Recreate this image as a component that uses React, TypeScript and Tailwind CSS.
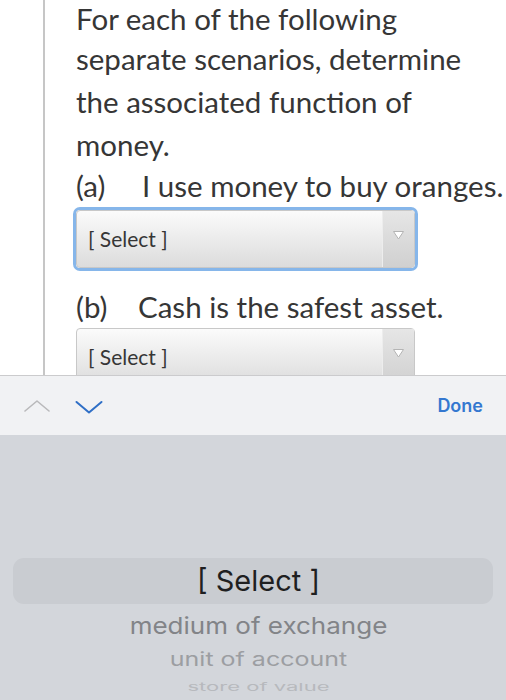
import React from 'react'

function SelectBox({ focused }: { focused?: boolean }) {
  return (
    <div
      className={`relative flex h-[58px] w-[339px] items-center rounded-[4px] border border-[#c8c8c8] bg-gradient-to-b from-[#fbfbfb] to-[#dcdcdc] ${
        focused ? 'ring-[3px] ring-[#86b6ea]' : ''
      }`}
    >
      <span className="pl-[11px] text-[21px] text-[#363636]">[ Select ]</span>
      {/* arrow column */}
      <div className="absolute right-0 top-0 flex h-full w-[32px] items-center justify-center border-l border-[#ededed] bg-gradient-to-b from-[#e6e6e6] to-[#d0d0d0]">
        <svg width="13" height="11" viewBox="0 0 13 11" className="-mt-[7px]">
          <polygon points="1.5,1.5 11.5,1.5 6.5,9" fill="#ffffff" stroke="#b4b4b4" strokeWidth="1" strokeLinejoin="round" />
        </svg>
      </div>
    </div>
  )
}

export default function App() {
  return (
    <div className="relative flex h-[700px] w-[506px] flex-col overflow-hidden bg-white">
      {/* question content */}
      <div className="h-[375px] shrink-0 overflow-hidden pl-[43px]" style={{ fontFamily: 'Lato, "Open Sans", sans-serif' }}>
        <div className="h-full border-l-2 border-[#c6c6c6] pl-[31px] text-[#363636]">
          <p className="pt-[3px] text-[29.5px] leading-[31px]">For each of the following</p>
          <p className="mt-[3px] text-[29.5px] leading-[43px]">
            separate scenarios, determine
            <br />
            the associated function of
            <br />
            money.
          </p>
          <div className="-mt-[2px] flex whitespace-nowrap text-[29.5px] leading-[43px]">
            <span className="w-[66px] shrink-0">(a)</span>
            <span>I use money to buy oranges.</span>
          </div>
          <div className="mt-[3px]">
            <SelectBox focused />
          </div>
          <div className="mt-[17px] flex whitespace-nowrap text-[29.5px] leading-[43px]">
            <span className="w-[62px] shrink-0">(b)</span>
            <span>Cash is the safest asset.</span>
          </div>
          <SelectBox />
        </div>
      </div>

      {/* keyboard accessory bar */}
      <div className="flex h-[60px] shrink-0 items-center border-t border-[#cbcbcd] bg-[#f1f2f4] pl-[24px] pr-[23px]" style={{ fontFamily: 'Inter, "Liberation Sans", sans-serif' }}>
        <svg width="26" height="14" viewBox="0 0 26 14" className="mt-[1px]">
          <polyline points="1,12 13,2 25,12" fill="none" stroke="#b9b9bb" strokeWidth="1.6" strokeLinecap="round" strokeLinejoin="round" />
        </svg>
        <svg width="28" height="15" viewBox="0 0 28 15" className="ml-[25px] mt-[3px]">
          <polyline points="1.5,2 14,12.5 26.5,2" fill="none" stroke="#2f6fc6" strokeWidth="2" strokeLinecap="round" strokeLinejoin="round" />
        </svg>
        <span className="ml-auto text-[18px] font-semibold text-[#3478d0]">Done</span>
      </div>

      {/* picker wheel */}
      <div className="flex flex-1 flex-col bg-[#d3d6db] px-[13px] pt-[123px]" style={{ fontFamily: 'Inter, "Liberation Sans", sans-serif' }}>
        <div className="flex h-[46px] items-center justify-center rounded-[11px] bg-[#c9ccd1] pl-[11px]">
          <span className="text-[29px] text-[#1f1f21]">[ Select ]</span>
        </div>
        <div className="mt-[2px] flex h-[38px] items-center justify-center pl-[11px]">
          <span className="scale-y-[0.9] text-[26px] text-[#828488]">medium of exchange</span>
        </div>
        <div className="mt-[1px] flex h-[30px] items-center justify-center pl-[11px]">
          <span className="scale-y-[0.75] text-[25px] text-[#9c9ea2]">unit of account</span>
        </div>
        <div className="mt-[1px] flex h-[22px] items-center justify-center pl-[11px]">
          <span className="scale-y-[0.5] text-[22px] text-[#b7b9bd]">store of value</span>
        </div>
      </div>
    </div>
  )
}
